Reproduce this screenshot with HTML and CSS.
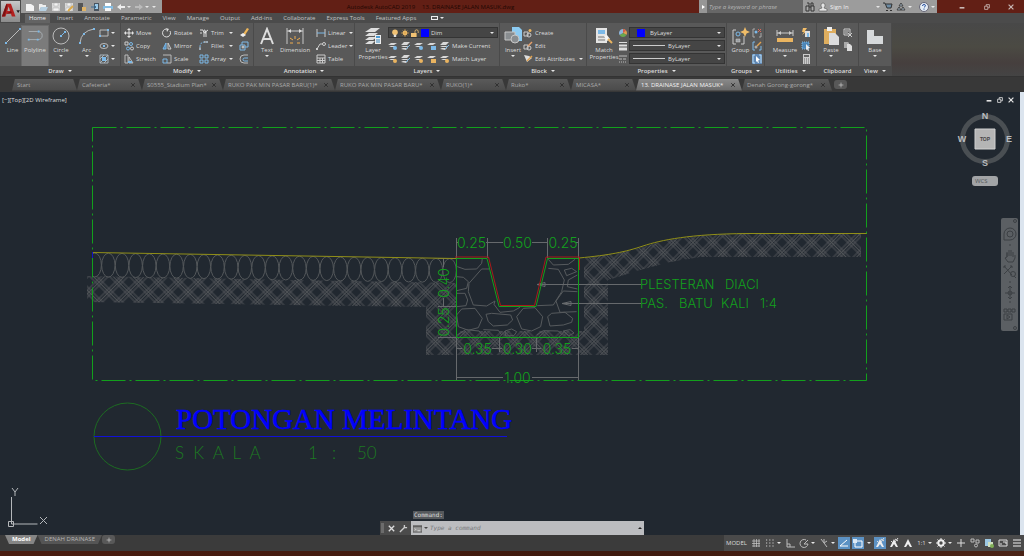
FILE: index.html
```html
<!DOCTYPE html>
<html lang="en">
<head>
    <meta charset="UTF-8">
    <title>Autodesk AutoCAD 2019 - 13. DRAINASE JALAN MASUK.dwg</title>
    <link rel="stylesheet" href="styles.css">
</head>

<body>
    <!-- icon set -->
    <svg class="defs" aria-hidden="true">
        <symbol id="new" viewBox="0 0 10 10"><path d="M1 2h5l3 2v5H1z" fill="#f4f4f4"/></symbol>
        <symbol id="open" viewBox="0 0 10 10"><path d="M1 2h3l1 1h3v2H3L1 9z" fill="#eee"/><path d="M3 5h7L8 9H1z" fill="#b7d0e2"/></symbol>
        <symbol id="save" viewBox="0 0 10 10"><path d="M1 1h8v8H1z" fill="#d8d8d8"/><path d="M3 1h4v3H3zM2 6h6v3H2z" fill="#f3f3f3" stroke="#aaa" stroke-width=".5"/></symbol>
        <symbol id="saveas" viewBox="0 0 10 10"><use href="#save"/><path d="M4 9l5-5" stroke="#dba94a" stroke-width="2"/></symbol>
        <symbol id="web" viewBox="0 0 10 10"><path d="M1 1h5v8H1z" fill="#555"/><path d="M5 5h4v4H5z" fill="#e0b468"/></symbol>
        <symbol id="phone" viewBox="0 0 10 10"><path d="M4 1h5v8H4z" fill="#4a5560"/><path d="M5 2h3v5H5z" fill="#9ccbea"/><path d="M1 5h5M4 3l2 2-2 2" stroke="#3d6d92" fill="none"/></symbol>
        <symbol id="print" viewBox="0 0 10 10"><path d="M2 1h6v3H2z" fill="#fff"/><path d="M0 4h10v3H0z" fill="#85bde2"/><path d="M2 6h6v3H2z" fill="#f6f6f6"/></symbol>
        <symbol id="undo" viewBox="0 0 10 10"><path d="M1 5l4-3v2h4v2H5v2z" fill="#eee"/></symbol>
        <symbol id="redo" viewBox="0 0 10 10"><path d="M9 5L5 2v2H1v2h4v2z" fill="#bbb"/></symbol>
        <symbol id="line" viewBox="0 0 18 18"><path d="M2 16L16 2" stroke="#bbb"/><path d="M1 15h2v2H1zM15 1h2v2h-2z" fill="#7cb9e8"/></symbol>
        <symbol id="pline" viewBox="0 0 20 18"><path d="M3 4h10q5 0 5 4.500t-5 4.500H3" fill="none" stroke="#a9b0b4"/><path d="M2 12h2v2H2zM12 12h2v2h-2zM13 3h2v2h-2z" fill="#7cb9e8"/></symbol>
        <symbol id="circle" viewBox="0 0 18 18"><circle cx="9" cy="9" r="8" fill="none" stroke="#bbb"/><path d="M9 9l4-4" stroke="#7cb9e8"/><path d="M8 8h2v2H8zM12 4h2v2h-2z" fill="#7cb9e8"/></symbol>
        <symbol id="arc" viewBox="0 0 18 18"><path d="M2 16Q3 4 16 2" fill="none" stroke="#bbb"/><path d="M1 15h2v2H1zM15 1h2v2h-2zM5 6h2v2H5z" fill="#7cb9e8"/></symbol>
        <symbol id="rect" viewBox="0 0 10 10"><path d="M1 2h8v6H1z" fill="none" stroke="#bbb"/><path d="M8 1h2v2H8zM0 7h2v2H0z" fill="#7cb9e8"/></symbol>
        <symbol id="ellipse" viewBox="0 0 10 10"><ellipse cx="5" cy="5" rx="4" ry="2.500" fill="none" stroke="#bbb"/><path d="M4 4h2v2H4z" fill="#7cb9e8"/></symbol>
        <symbol id="hatch" viewBox="0 0 10 10"><path d="M1 1h8v8H1zM1 5l4-4M1 9l8-8M5 9l4-4" fill="none" stroke="#aab4bb"/><path d="M3 3h4v4H3z" fill="#7cb9e8"/></symbol>
        <symbol id="move" viewBox="0 0 10 10"><path d="M5 1v8M1 5h8" stroke="#e4e4e4"/><path d="M5 0l2 2H3zM5 10l2-2H3zM0 5l2-2v4zM10 5L8 3v4z" fill="#e4e4e4"/></symbol>
        <symbol id="copy" viewBox="0 0 10 10"><path d="M1 1h3v3H1z" fill="none" stroke="#ccc"/><circle cx="7" cy="3" r="1.500" fill="none" stroke="#7cb9e8"/><circle cx="4" cy="7.500" r="1.500" fill="none" stroke="#7cb9e8"/><circle cx="8" cy="7.500" r="1.500" fill="none" stroke="#ccc"/></symbol>
        <symbol id="stretch" viewBox="0 0 10 10"><path d="M1 1h3v8H1zM5 3l4 6H5z" fill="none" stroke="#bbb"/><path d="M4 7h4v2H4z" fill="#7cb9e8"/></symbol>
        <symbol id="rotate" viewBox="0 0 10 10"><path d="M8 3a4 4 0 1 1-4-2" fill="none" stroke="#ddd"/><path d="M4 0l3 1-2 3z" fill="#ddd"/></symbol>
        <symbol id="mirror" viewBox="0 0 10 10"><path d="M4 2v6H1z" fill="#4e86b6" stroke="#7cb9e8"/><path d="M6 2v6h3z" fill="none" stroke="#ccc"/></symbol>
        <symbol id="scale" viewBox="0 0 10 10"><path d="M1 1h8v8H5" fill="none" stroke="#bbb"/><path d="M1 5h4v4H1z" fill="none" stroke="#7cb9e8"/></symbol>
        <symbol id="trim" viewBox="0 0 10 10"><path d="M1 2h3l1 3 4-3M5 5v4M7 5v4M1 5h2" fill="none" stroke="#ddd"/><path d="M5 1l3 3-2 2z" fill="#ddd"/></symbol>
        <symbol id="fillet" viewBox="0 0 10 10"><path d="M1 9V6q0-5 5-5h3" fill="none" stroke="#7cb9e8" stroke-dasharray="2 1"/><path d="M5 1h4M1 6v3" stroke="#ccc"/></symbol>
        <symbol id="array" viewBox="0 0 10 10"><path d="M1 1h3v3H1zM6 1h3v3H6zM1 6h3v3H1zM6 6h3v3H6z" fill="none" stroke="#7cb9e8"/></symbol>
        <symbol id="erase" viewBox="0 0 10 10"><path d="M4 6l4-6 2 1-4 6z" fill="#eeb65a"/><path d="M1 7l3-2 3 2-3 2z" fill="#eee"/></symbol>
        <symbol id="explode" viewBox="0 0 10 10"><path d="M1 4h5v5H1zM3 4V1h6v5H6" fill="none" stroke="#7cb9e8"/><circle cx="4" cy="6" r="1.500" fill="#bbb"/></symbol>
        <symbol id="offset" viewBox="0 0 10 10"><path d="M9 1H5a4 4 0 0 0 0 8h4" fill="none" stroke="#bbb"/><path d="M9 4H5.500a1.500 1.500 0 0 0 0 3H9" fill="none" stroke="#7cb9e8"/></symbol>
        <symbol id="text" viewBox="0 0 18 18"><path d="M3 17L9 2l6 15M5 12h8" fill="none" stroke="#ddd" stroke-width="2"/></symbol>
        <symbol id="dim" viewBox="0 0 18 18"><path d="M1 1v16M17 1v16M1 4h16" stroke="#c8c8c8" fill="none"/><path d="M2 4l3-2v4zM16 4l-3-2v4z" fill="#ddd"/><path d="M9 9v3M4 11l3 2M14 11l-3 2M4 16h3M14 16h-3" stroke="#f0ad4e"/></symbol>
        <symbol id="linear" viewBox="0 0 10 10"><path d="M1 1v8M9 1v8" stroke="#ccc"/><path d="M1 5h8" stroke="#7cb9e8"/></symbol>
        <symbol id="leader" viewBox="0 0 10 10"><path d="M1 8l3-5h3" fill="none" stroke="#ccc"/><circle cx="8" cy="3" r="1.500" fill="none" stroke="#ccc"/><path d="M0 7h2v2H0z" fill="#ccc"/></symbol>
        <symbol id="table" viewBox="0 0 10 10"><path d="M1 1h8v8H1zM1 4h8M1 6.500h8M4 4v5M6.500 4v5" fill="none" stroke="#ccc"/></symbol>
        <symbol id="layers" viewBox="0 0 18 18"><path d="M1 5l6-4h9l-5 4zM1 9l4-3h9l-4 3zM1 13l4-3h8l-4 3zM1 17l4-3h6l-3 3z" fill="#dedede"/><path d="M11 8h6v9h-6z" fill="#eee"/><path d="M12 9h4v2h-4z" fill="#4e9bd2"/><path d="M12 13h4M12 15h4" stroke="#3b87bd"/></symbol>
        <symbol id="lay1" viewBox="0 0 10 10"><path d="M0 4l3-2h6L6 4zM1 6l2-1h5L6 6z" fill="#d8d8d8"/><circle cx="7" cy="7" r="2" fill="#7cb9e8"/></symbol>
        <symbol id="lay2" viewBox="0 0 10 10"><path d="M0 4l3-3h6L6 4zM0 6l2-1h6L6 6zM0 8l2-1h5L5 9z" fill="#d8d8d8"/><path d="M5 8l4-4" stroke="#7cb9e8"/></symbol>
        <symbol id="lay3" viewBox="0 0 10 10"><path d="M0 4l3-2h6L6 4zM1 6l2-1h5L6 6z" fill="#d8d8d8"/><circle cx="7" cy="7" r="2" fill="#eab460"/></symbol>
        <symbol id="lay4" viewBox="0 0 10 10"><path d="M0 4l3-2h6L6 4z" fill="#d8d8d8"/><path d="M4 5h5v4H4z" fill="#eab460"/></symbol>
        <symbol id="lay5" viewBox="0 0 10 10"><path d="M0 4l3-2h6L6 4z" fill="#d8d8d8"/><path d="M4 5h5v4H4z" fill="#7cb9e8"/></symbol>
        <symbol id="bulb" viewBox="0 0 10 10"><circle cx="5" cy="4" r="3.500" fill="#f0c173"/><path d="M3.500 7h3v3h-3z" fill="#ddd"/></symbol>
        <symbol id="sun" viewBox="0 0 10 10"><circle cx="5" cy="5" r="3" fill="#f0c173"/><path d="M5 0v10M0 5h10M2 2l6 6M8 2L2 8" stroke="#e0a850" stroke-width=".8"/></symbol>
        <symbol id="lock" viewBox="0 0 10 10"><path d="M0 5h7v5H0z" fill="#f0c173"/><path d="M5 5V3q0-2 2-2t2 2v2" fill="none" stroke="#f0c173"/></symbol>
        <symbol id="insert" viewBox="0 0 18 18"><path d="M8 0h7l3 3v11H8z" fill="#8ccbf2"/><path d="M1 5h10v8H1z" fill="#898d90" stroke="#c6c6c6"/><circle cx="11" cy="12" r="4" fill="#898d90" stroke="#c6c6c6"/></symbol>
        <symbol id="create" viewBox="0 0 10 10"><path d="M1 4h4v4H1z" fill="none" stroke="#ccc"/><circle cx="6" cy="7" r="2" fill="none" stroke="#ccc"/><circle cx="7" cy="2.500" r="1.500" fill="#eab460"/></symbol>
        <symbol id="edit" viewBox="0 0 10 10"><path d="M1 4h4v4H1z" fill="none" stroke="#ccc"/><circle cx="6" cy="7" r="2" fill="none" stroke="#ccc"/><path d="M5 5l4-4" stroke="#e7a06a" stroke-width="1.500"/></symbol>
        <symbol id="attr" viewBox="0 0 10 10"><path d="M1 1l3 7 5-4-3-2z" fill="#ddd"/><path d="M4 7l5-5" stroke="#e2a24e" stroke-width="1.500"/></symbol>
        <symbol id="match" viewBox="0 0 18 18"><path d="M1 1h11v15H1z" fill="#e4e4e4"/><path d="M3 3h7v4H3z" fill="#7cb9e8"/><path d="M3 10h7M3 13h7" stroke="#777"/><path d="M9 9l3-1 3 4-3 2z" fill="#f4f4f4"/><path d="M13 12l4 4" stroke="#eab460" stroke-width="2"/></symbol>
        <symbol id="wheel" viewBox="0 0 10 10"><path d="M5 5V1a4 4 0 0 1 3.500 6z" fill="#e0a050"/><path d="M5 5l3.500 2a4 4 0 0 1-7 0z" fill="#6aa84f"/><path d="M5 5L1.500 7A4 4 0 0 1 5 1z" fill="#8fb6dc"/><path d="M5 1a4 4 0 0 1 3 1.500L5 5z" fill="#cf5b4e"/></symbol>
        <symbol id="weight" viewBox="0 0 10 10"><path d="M1 1.500h8" stroke="#ddd"/><path d="M1 4.500h8" stroke="#ddd" stroke-width="2"/><path d="M1 8h8" stroke="#ddd" stroke-width="3"/></symbol>
        <symbol id="ltype" viewBox="0 0 10 10"><path d="M1 2h8" stroke="#bbb"/><path d="M1 5h8" stroke="#bbb" stroke-dasharray="3 1"/><path d="M1 8h8" stroke="#bbb" stroke-dasharray="1 1"/></symbol>
        <symbol id="group" viewBox="0 0 18 18"><path d="M4 3H1v14h3M9 17h3V9" fill="none" stroke="#ccc"/><circle cx="6" cy="7" r="2" fill="none" stroke="#7cb9e8"/><path d="M4 12h4v3H4z" fill="#9a9fa3" stroke="#ccc" stroke-width=".5"/><path d="M13 0l1.500 3.500L18 5l-3.500 1.500L13 10l-1.500-3.500L8 5l3.500-1.500z" fill="#f0bd68"/></symbol>
        <symbol id="ungroup" viewBox="0 0 10 10"><path d="M3 1H1v8h2M7 9h2V5" fill="none" stroke="#aaa"/><circle cx="4" cy="4" r="1.500" fill="#7cb9e8"/><path d="M6 1l3 3M9 1L6 4" stroke="#d7695c"/></symbol>
        <symbol id="gedit" viewBox="0 0 10 10"><path d="M3 1H1v8h2M7 9h2V5" fill="none" stroke="#7cb9e8"/><circle cx="4" cy="6" r="1.500" fill="#aaa"/><path d="M5 5l4-4" stroke="#e2a24e" stroke-width="1.500"/></symbol>
        <symbol id="gsel" viewBox="0 0 10 10"><path d="M0 0h10v10H0z" fill="#5f87b3"/><path d="M3 1H1v8h2M7 1h2v8" fill="none" stroke="#b8dcf6"/><path d="M4 2l4 4-2 .5 1 2-1 .5-1-2-1 1z" fill="#fff"/></symbol>
        <symbol id="measure" viewBox="0 0 18 18"><path d="M1 3v6M17 3v6M1 6h16" stroke="#ccc"/><path d="M2 6l3-2v4zM16 6l-3-2v4z" fill="#ccc"/><path d="M1 11h16v4H1z" fill="#eab460"/></symbol>
        <symbol id="qsel" viewBox="0 0 10 10"><path d="M2 0L1 4h2L1 7l5-4H4l2-3z" fill="#f2bd69"/><path d="M4 3h5v6H4z" fill="#ddd"/><path d="M6 5h2v4H6z" fill="#7cb9e8"/></symbol>
        <symbol id="qcalc" viewBox="0 0 10 10"><path d="M1 1h7v7H1z" fill="#4e86b6" stroke="#7cb9e8" stroke-dasharray="1 1"/><path d="M5 3l4 4-2 .5 1 2-1 .5-1-2-1 1z" fill="#eee"/></symbol>
        <symbol id="calc" viewBox="0 0 10 10"><path d="M2 0h7v10H2z" fill="#ccc"/><path d="M3 1h5v2H3z" fill="#666"/><path d="M3 5h5M3 7h5M3 9h5" stroke="#666" stroke-dasharray="1 1"/></symbol>
        <symbol id="paste" viewBox="0 0 18 18"><path d="M2 2h12v15H2z" fill="#dfae5f"/><path d="M5 0h5v4H5z" fill="#eee"/><path d="M7 6h6l4 4v8H7z" fill="#dcdcdc"/></symbol>
        <symbol id="cut" viewBox="0 0 10 10"><path d="M1 1h6v6H1z" fill="none" stroke="#ccc"/><path d="M2 3h4M2 5h3" stroke="#ccc"/><path d="M5 5l4 4M9 5L5 9" stroke="#ccc"/></symbol>
        <symbol id="clip" viewBox="0 0 10 10"><path d="M1 1h4l1 1v5H1z" fill="#aaa"/><path d="M4 3h3l2 2v5H4z" fill="#ddd"/></symbol>
        <symbol id="base" viewBox="0 0 18 18"><path d="M1 3h7v6h9v8H1z" fill="#d6d9db"/></symbol>
        <symbol id="x" viewBox="0 0 10 10"><path d="M2 2l6 6M8 2L2 8" stroke="currentColor" stroke-width="1.500"/></symbol>
        <symbol id="min" viewBox="0 0 10 10"><path d="M2 6h6" stroke="currentColor" stroke-width="2"/></symbol>
        <symbol id="max" viewBox="0 0 10 10"><path d="M2 4h4v4H2zM4 4V2h4v4H6" fill="none" stroke="currentColor"/></symbol>
        <symbol id="find" viewBox="0 0 10 10"><path d="M1 4h3v5H1zM6 4h3v5H6zM2 1h2v3M6 4V1h2v3M4 5h2" fill="#aaa" stroke="#333"/></symbol>
        <symbol id="user" viewBox="0 0 10 10"><path d="M3 3a2 2 0 1 1 4 0v1l-1 2 3 1v2H1V7l3-1-1-2z" fill="#e4e4e4" stroke="#555" stroke-width=".6"/></symbol>
        <symbol id="cart" viewBox="0 0 10 10"><path d="M0 1h2l2 5h4l1-4H3" fill="#6d8ba3" stroke="#333"/><path d="M3 8h2v1H3zM7 8h2v1H7z" fill="#333"/></symbol>
        <symbol id="a360" viewBox="0 0 10 10"><path d="M5 1l2 3H3zM3 5l2 3H1zM7 5l2 3H5z" fill="#9fb4c5" stroke="#444"/></symbol>
        <symbol id="help" viewBox="0 0 10 10"><circle cx="5" cy="5" r="4.500" fill="#e5edf5" stroke="#667"/><path d="M3.500 4q0-1.500 1.500-1.500t1.500 1.300q0 .7-1.500 1.500M5 6.500v1.200" fill="none" stroke="#2750a0"/></symbol>
        <symbol id="grid" viewBox="0 0 10 10"><path d="M3 1v8M5.500 1v8M8 1v8M1 3h8M1 5.500h8M1 8h8" stroke="#ccc" stroke-width=".7"/></symbol>
        <symbol id="snap" viewBox="0 0 10 10"><path d="M1 2h8M1 5h8M1 8h8" stroke="#ccc" stroke-width="1.200" stroke-dasharray="1.200 2"/></symbol>
        <symbol id="ortho" viewBox="0 0 10 10"><path d="M2 1v8h8M2 6h3v3" fill="none" stroke="#bbb"/></symbol>
        <symbol id="polar" viewBox="0 0 10 10"><path d="M9 6a4 4 0 1 1-2-4M5 6l4-4M5 6h4" fill="none" stroke="#bbb"/></symbol>
        <symbol id="iso" viewBox="0 0 10 10"><path d="M2 1l6 8M5 1v3M5 5l3-2" stroke="#bbb" fill="none"/></symbol>
        <symbol id="track" viewBox="0 0 10 10"><path d="M9 8H1l7-6" fill="none" stroke="#fff"/></symbol>
        <symbol id="osnap" viewBox="0 0 10 10"><path d="M2 3h7v6H2z" fill="none" stroke="#fff"/><path d="M0 1h4v4H0z" fill="#dceaf5"/></symbol>
        <symbol id="anno" viewBox="0 0 10 10"><path d="M5 1L1 9h2l2-3 2 3h2z" fill="#eee"/></symbol>
        <symbol id="anno2" viewBox="0 0 10 10"><path d="M5 1L1 9h2l2-3 2 3h2z" fill="#eee"/><path d="M6 1l3 2M9 0L6 4M2 3l2 2" stroke="#ddd"/></symbol>
        <symbol id="gear" viewBox="0 0 10 10"><circle cx="5" cy="5" r="2.700" fill="none" stroke="#eee" stroke-width="2"/><path d="M5 0v2M5 8v2M0 5h2M8 5h2M1.500 1.500l1 1M7.500 7.500l1 1M8.500 1.500l-1 1M2.500 7.500l-1 1" stroke="#eee"/></symbol>
        <symbol id="plus" viewBox="0 0 10 10"><path d="M5 1v8M1 5h8" stroke="currentColor"/></symbol>
        <symbol id="isolate" viewBox="0 0 10 10"><path d="M1 1h3v3H1zM6 2h3v3H6z" fill="none" stroke="#bbb"/><circle cx="6" cy="7.500" r="1.500" fill="none" stroke="#bbb"/></symbol>
        <symbol id="perf" viewBox="0 0 10 10"><path d="M1 1h6v7H1z" fill="#9cc7e2"/><path d="M4 4h5v5H4z" fill="#cfe0c0"/><circle cx="8" cy="8" r="2" fill="#7fae55"/></symbol>
        <symbol id="clean" viewBox="0 0 10 10"><path d="M1 2h8v6H1zM5 4h3M8 4v2M2 6h2" fill="none" stroke="#ddd"/></symbol>
        <symbol id="menu" viewBox="0 0 10 10"><path d="M1 2h8M1 5h8M1 8h8" stroke="#eee"/></symbol>
        <symbol id="wrench" viewBox="0 0 10 10"><path d="M1 9l5-5M6 1v3h3" stroke="#ccc" stroke-width="1.500" fill="none"/></symbol>
        <symbol id="prompt" viewBox="0 0 10 10"><path d="M0 2h10v7H0z" fill="#999" stroke="#555"/><path d="M0 3h10" stroke="#555"/><path d="M2 5l1 1-1 1M5 7.500h3" fill="none" stroke="#eee" stroke-width=".8"/></symbol>
    </svg>

    <!-- title bar + ribbon tabs -->
    <header class="top">
        <button class="app" aria-label="Application menu">
            <svg viewBox="0 0 21 22"><path d="M1 16L6 2h5l5 14h-4l-1-3H6l-1 3zM7 10h3L8.500 5z" fill="#b3211f"/><path d="M1 16L6 2l1 2-3 12zM6 13l5-3 1 2z" fill="#7c1213"/><path d="M17 9h4l-2 3z" fill="#222"/></svg>
        </button>
        <div class="title-bar">
            <div class="quick">
                <button aria-label="New"><svg><use href="#new"/></svg></button>
                <button aria-label="Open"><svg><use href="#open"/></svg></button>
                <button aria-label="Save"><svg><use href="#save"/></svg></button>
                <button aria-label="Save as"><svg><use href="#saveas"/></svg></button>
                <button aria-label="Open from web"><svg><use href="#web"/></svg></button>
                <button aria-label="Save to mobile"><svg><use href="#phone"/></svg></button>
                <button aria-label="Plot"><svg><use href="#print"/></svg></button>
                <button class="drop" aria-label="Undo"><svg><use href="#undo"/></svg></button>
                <button class="drop" aria-label="Redo"><svg><use href="#redo"/></svg></button>
                <button class="drop" aria-label="Customize"></button>
            </div>
            <p class="doc-name"><span>Autodesk AutoCAD 2019</span><span>13. DRAINASE JALAN MASUK.dwg</span></p>
            <button class="search-toggle" aria-label="Collapse search"></button>
            <input class="search" type="text" aria-label="Search" placeholder="Type a keyword or phrase">
            <div class="account">
                <button aria-label="Find"><svg><use href="#find"/></svg></button>
                <button class="sign-in drop"><svg><use href="#user"/></svg>Sign In</button>
                <button aria-label="App store"><svg><use href="#cart"/></svg></button>
                <button class="drop" aria-label="A360"><svg><use href="#a360"/></svg></button>
                <button class="drop help" aria-label="Help"><svg><use href="#help"/></svg></button>
            </div>
            <div class="win-btns">
                <button aria-label="Minimize"><svg><use href="#min"/></svg></button>
                <button aria-label="Restore"><svg><use href="#max"/></svg></button>
                <button aria-label="Close"><svg><use href="#x"/></svg></button>
            </div>
        </div>
        <nav class="menu">
            <a class="on" href="#">Home</a>
            <a href="#">Insert</a>
            <a href="#">Annotate</a>
            <a href="#">Parametric</a>
            <a href="#">View</a>
            <a href="#">Manage</a>
            <a href="#">Output</a>
            <a href="#">Add-ins</a>
            <a href="#">Collaborate</a>
            <a href="#">Express Tools</a>
            <a href="#">Featured Apps</a>
            <button class="drop" aria-label="Ribbon display"><span class="rib-icon"></span></button>
        </nav>
    </header>

    <!-- ribbon -->
    <div class="ribbon">
        <section class="panel draw">
            <div class="tools">
                <button class="big"><svg><use href="#line"/></svg>Line</button>
                <button class="big on"><svg><use href="#pline"/></svg>Polyline</button>
                <button class="big more"><svg><use href="#circle"/></svg>Circle</button>
                <button class="big more"><svg><use href="#arc"/></svg>Arc</button>
                <div class="col">
                    <button class="drop" aria-label="Rectangle"><svg><use href="#rect"/></svg></button>
                    <button class="drop" aria-label="Ellipse"><svg><use href="#ellipse"/></svg></button>
                    <button class="drop" aria-label="Hatch"><svg><use href="#hatch"/></svg></button>
                </div>
            </div>
            <h2 class="drop">Draw</h2>
        </section>
        <section class="panel modify">
            <div class="tools">
                <div class="col">
                    <button><svg><use href="#move"/></svg>Move</button>
                    <button><svg><use href="#copy"/></svg>Copy</button>
                    <button><svg><use href="#stretch"/></svg>Stretch</button>
                </div>
                <div class="col">
                    <button><svg><use href="#rotate"/></svg>Rotate</button>
                    <button><svg><use href="#mirror"/></svg>Mirror</button>
                    <button><svg><use href="#scale"/></svg>Scale</button>
                </div>
                <div class="col spread">
                    <button class="drop"><svg><use href="#trim"/></svg>Trim</button>
                    <button class="drop"><svg><use href="#fillet"/></svg>Fillet</button>
                    <button class="drop"><svg><use href="#array"/></svg>Array</button>
                </div>
                <div class="col">
                    <button aria-label="Erase"><svg><use href="#erase"/></svg></button>
                    <button aria-label="Explode"><svg><use href="#explode"/></svg></button>
                    <button aria-label="Offset"><svg><use href="#offset"/></svg></button>
                </div>
            </div>
            <h2 class="drop">Modify</h2>
        </section>
        <section class="panel annotation">
            <div class="tools">
                <button class="big more"><svg><use href="#text"/></svg>Text</button>
                <button class="big"><svg><use href="#dim"/></svg>Dimension</button>
                <div class="col spread">
                    <button class="drop"><svg><use href="#linear"/></svg>Linear</button>
                    <button class="drop"><svg><use href="#leader"/></svg>Leader</button>
                    <button><svg><use href="#table"/></svg>Table</button>
                </div>
            </div>
            <h2 class="drop">Annotation</h2>
        </section>
        <section class="panel layer">
            <div class="tools">
                <button class="big"><svg><use href="#layers"/></svg>Layer<br>Properties</button>
                <div class="col">
                    <div class="combo">
                        <svg><use href="#bulb"/></svg><svg><use href="#sun"/></svg><svg><use href="#lock"/></svg><span class="swatch"></span>
                        <select aria-label="Layer"><option>Dim</option></select>
                    </div>
                    <div class="row">
                        <button aria-label="Off"><svg><use href="#lay1"/></svg></button>
                        <button aria-label="Isolate"><svg><use href="#lay2"/></svg></button>
                        <button aria-label="Freeze"><svg><use href="#lay1"/></svg></button>
                        <button aria-label="Lock"><svg><use href="#lay5"/></svg></button>
                        <button><svg><use href="#lay2"/></svg>Make Current</button>
                    </div>
                    <div class="row">
                        <button aria-label="Turn all on"><svg><use href="#lay3"/></svg></button>
                        <button aria-label="Unisolate"><svg><use href="#lay2"/></svg></button>
                        <button aria-label="Thaw all"><svg><use href="#lay3"/></svg></button>
                        <button aria-label="Unlock"><svg><use href="#lay4"/></svg></button>
                        <button><svg><use href="#lay3"/></svg>Match Layer</button>
                    </div>
                </div>
            </div>
            <h2 class="drop">Layers</h2>
        </section>
        <section class="panel block">
            <div class="tools">
                <button class="big more"><svg><use href="#insert"/></svg>Insert</button>
                <div class="col spread">
                    <button><svg><use href="#create"/></svg>Create</button>
                    <button><svg><use href="#edit"/></svg>Edit</button>
                    <button class="drop"><svg><use href="#attr"/></svg>Edit Attributes</button>
                </div>
            </div>
            <h2 class="drop">Block</h2>
        </section>
        <section class="panel props">
            <div class="tools">
                <button class="big"><svg><use href="#match"/></svg>Match<br>Properties</button>
                <div class="col">
                    <div class="row"><svg><use href="#wheel"/></svg>
                        <div class="combo color"><span class="swatch"></span><select aria-label="Object color"><option>ByLayer</option></select></div>
                    </div>
                    <div class="row"><svg><use href="#weight"/></svg>
                        <div class="combo"><span class="sample"></span><select aria-label="Lineweight"><option>ByLayer</option></select></div>
                    </div>
                    <div class="row"><svg><use href="#ltype"/></svg>
                        <div class="combo"><span class="sample"></span><select aria-label="Linetype"><option>ByLayer</option></select></div>
                    </div>
                </div>
            </div>
            <h2 class="drop">Properties</h2>
        </section>
        <section class="panel groups">
            <div class="tools">
                <button class="big"><svg><use href="#group"/></svg>Group</button>
                <div class="col">
                    <button aria-label="Ungroup"><svg><use href="#ungroup"/></svg></button>
                    <button aria-label="Group edit"><svg><use href="#gedit"/></svg></button>
                    <button aria-label="Group selection"><svg><use href="#gsel"/></svg></button>
                </div>
            </div>
            <h2 class="drop">Groups</h2>
        </section>
        <section class="panel utils">
            <div class="tools">
                <button class="big more"><svg><use href="#measure"/></svg>Measure</button>
                <div class="col">
                    <button aria-label="Quick select"><svg><use href="#qsel"/></svg></button>
                    <button aria-label="Select all"><svg><use href="#qcalc"/></svg></button>
                    <button aria-label="Calculator"><svg><use href="#calc"/></svg></button>
                </div>
            </div>
            <h2 class="drop">Utilities</h2>
        </section>
        <section class="panel clipb">
            <div class="tools">
                <button class="big more"><svg><use href="#paste"/></svg>Paste</button>
                <div class="col">
                    <button aria-label="Cut"><svg><use href="#cut"/></svg></button>
                    <button aria-label="Copy clip"><svg><use href="#clip"/></svg></button>
                </div>
            </div>
            <h2>Clipboard</h2>
        </section>
        <section class="panel view">
            <div class="tools">
                <button class="big more"><svg><use href="#base"/></svg>Base</button>
            </div>
            <h2 class="drop">View</h2>
        </section>
    </div>

    <!-- drawing tabs -->
    <nav class="files">
        <a class="w65" href="#">Start</a>
        <a class="w65" href="#">Cafeteria*<svg><use href="#x"/></svg></a>
        <a class="w80" href="#">S0555_Stadium Plan*<svg><use href="#x"/></svg></a>
        <a class="w110" href="#">RUKO PAK MIN PASAR BARU(1)*<svg><use href="#x"/></svg></a>
        <a class="w105" href="#">RUKO PAK MIN PASAR BARU*<svg><use href="#x"/></svg></a>
        <a class="w65" href="#">RUKO(1)*<svg><use href="#x"/></svg></a>
        <a class="w65" href="#">Ruko*<svg><use href="#x"/></svg></a>
        <a class="w65" href="#">MICASA*<svg><use href="#x"/></svg></a>
        <a class="w105 on" href="#">13. DRAINASE JALAN MASUK*<svg><use href="#x"/></svg></a>
        <a class="w90" href="#">Denah Gorong-gorong*<svg><use href="#x"/></svg></a>
        <button class="add" aria-label="New drawing"><svg><use href="#plus"/></svg></button>
    </nav>

    <!-- model space -->
    <main class="canvas">
        <svg class="drawing" viewBox="0 92 1020 443" preserveAspectRatio="xMinYMin meet">
            <defs>
                <!-- earth hatch, 20 px repeat on the diagonal -->
                <pattern id="earth" width="14" height="14" patternUnits="userSpaceOnUse" patternTransform="rotate(45)">
                    <path d="M0 1h14M0 3.500h14M0 6h14M1 0v14M3.500 0v14M6 0v14" stroke="#54575a" stroke-width=".9"/>
                </pattern>
                <clipPath id="road"><path d="M93 250H456V286H93z"/></clipPath>
            </defs>

            <text class="vp-label" x="2" y="102">[−][Top][2D Wireframe]</text>

            <path fill="url(#earth)" d="M87 276L456 283V331H584V258L603 255 623 252 643 247 660 242 687 237 710 235 747 233H861V257H700L670 262 640 270 608 280V355H426V307L87 302z"/>

            <!-- stone course under the road -->
            <g clip-path="url(#road)">
                <path class="course" d="M88 265a6.700 12 0 1 1 13.400 0a6.700 12 0 1 1-13.400 0m13.650.2a6.700 12 0 1 1 13.400 0a6.700 12 0 1 1-13.400 0m13.650.2a6.700 12 0 1 1 13.400 0a6.700 12 0 1 1-13.400 0m13.650.2a6.700 12 0 1 1 13.400 0a6.700 12 0 1 1-13.400 0m13.650.2a6.700 12 0 1 1 13.400 0a6.700 12 0 1 1-13.400 0m13.650.2a6.700 12 0 1 1 13.400 0a6.700 12 0 1 1-13.400 0m13.650.2a6.700 12 0 1 1 13.400 0a6.700 12 0 1 1-13.400 0m13.650.2a6.700 12 0 1 1 13.400 0a6.700 12 0 1 1-13.400 0m13.650.2a6.700 12 0 1 1 13.400 0a6.700 12 0 1 1-13.400 0"/>
                <path class="course" d="M210.850 267a6.700 12 0 1 1 13.400 0a6.700 12 0 1 1-13.400 0m13.650.2a6.700 12 0 1 1 13.400 0a6.700 12 0 1 1-13.400 0m13.650.2a6.700 12 0 1 1 13.400 0a6.700 12 0 1 1-13.400 0m13.650.2a6.700 12 0 1 1 13.400 0a6.700 12 0 1 1-13.400 0m13.650.2a6.700 12 0 1 1 13.400 0a6.700 12 0 1 1-13.400 0m13.650.2a6.700 12 0 1 1 13.400 0a6.700 12 0 1 1-13.400 0m13.650.2a6.700 12 0 1 1 13.400 0a6.700 12 0 1 1-13.400 0m13.650.2a6.700 12 0 1 1 13.400 0a6.700 12 0 1 1-13.400 0m13.650.2a6.700 12 0 1 1 13.400 0a6.700 12 0 1 1-13.400 0"/>
                <path class="course" d="M333.700 269a6.700 12 0 1 1 13.400 0a6.700 12 0 1 1-13.400 0m13.650.2a6.700 12 0 1 1 13.400 0a6.700 12 0 1 1-13.400 0m13.650.2a6.700 12 0 1 1 13.400 0a6.700 12 0 1 1-13.400 0m13.650.2a6.700 12 0 1 1 13.400 0a6.700 12 0 1 1-13.400 0m13.650.2a6.700 12 0 1 1 13.400 0a6.700 12 0 1 1-13.400 0m13.650.2a6.700 12 0 1 1 13.400 0a6.700 12 0 1 1-13.400 0m13.650.2a6.700 12 0 1 1 13.400 0a6.700 12 0 1 1-13.400 0m13.650.2a6.700 12 0 1 1 13.400 0a6.700 12 0 1 1-13.400 0m13.650.2a6.700 12 0 1 1 13.400 0a6.700 12 0 1 1-13.400 0"/>
            </g>

            <!-- masonry -->
            <g class="stones" transform="translate(420 225) scale(.3333)">
                <path d="M125 252l40-2 22 30-12 28-30 8-30-11-5-35z"/>
                <path d="M198 268l17-3 57 5 6 15-16 15-42 3-15-13z"/>
                <path d="M290 275l20-25 35-2 23 27-6 30-27 13-30-6z"/>
                <path d="M383 275l12-10 40-3 23 18-3 12-25 8-40 3z"/>
                <path d="M208 132l-23 0-38 43-2 25 15 40 40 3 25-15"/>
                <path d="M112 125l23 8 35-1 15-17 2-15"/>
                <path d="M110 155l20 2 15 13-5 20-30 7M110 205h25l8 20-5 17-28 3"/>
                <path d="M385 130l30 3 18 32-8 35-25 40-48 2"/>
                <path d="M385 103l15 17 45-2 20-15M433 135l22-5 15 10-30 12z"/>
                <path d="M472 150l-27 15-3 20 30 7M472 200l-42-2-22 30 12 34 50-2"/>
                <path d="M225 228l-3 10 18 24 40-4 20-11"/>
                <path d="M255 318l20-6 15 8-8 12-25 1zM430 318l20-4 12 10-15 8z"/>
                <path d="M112 330l25-16 40 4 12 14M190 314l45 2 10 14M350 330l20-13 45 1 12 12"/>
            </g>

            <!-- dimension and leader lines -->
            <path class="thin" d="M456.500 238V380M487.500 238V258M547.500 238V258M578.500 238V380M457 242.500h1M486 242.500h17M532 242.500h16M576 242.500h2"/>
            <path class="thin" d="M457 377.500h46M532 377.500h46M457 348.500h5M492 348.500h10M532 348.500h9M572 348.500h6M443.500 258v9M443.500 298v9M438 258.500h18M438 306.500h18M438 337.500h18M499.500 338v14M536.500 338v14"/>
            <path class="thin" d="M537 284.500h104M562 303.500h79M537 284.500l8-2v4zM562 303.500l9-2v4z"/>

            <path class="yellow" d="M93 252.500L456 258.500M579 258C610 255 625 252 643 246S690 234 747 233.500H867"/>
            <path class="red" d="M455 257H488.500L500.500 305.500H534.500L546 257H579.500V270"/>
            <path class="green" d="M456.500 258.500H487L499 306.500H536L547.500 258.500H578.500V337.500H456.500z"/>
            <path class="green dash" d="M92.500 127.500H866.500V380.500H92.500z"/>
            <path class="blue" d="M92.500 252v6"/>

            <g class="dims">
                <text x="471.500" y="248">0.25</text>
                <text x="517.500" y="248">0.50</text>
                <text x="563" y="248">0.25</text>
                <text x="477.500" y="354">0.35</text>
                <text x="517.500" y="354">0.30</text>
                <text x="557" y="354">0.35</text>
                <text x="517.500" y="383">1.00</text>
                <text transform="translate(449 283) rotate(-90)">0.40</text>
                <text transform="translate(449 322) rotate(-90)">0.25</text>
            </g>
            <text class="note" x="640" y="289">PLESTERAN <tspan x="725">DIACI</tspan></text>
            <text class="note" x="640" y="308">PAS. <tspan x="679">BATU </tspan><tspan x="721">KALI </tspan><tspan x="760">1:4</tspan></text>

            <!-- view title -->
            <circle class="ring" cx="127.500" cy="436.500" r="33.500"/>
            <path class="title-line" d="M94 436H507V437H94z"/>
            <text class="view-title" x="176" y="429">POTONGAN MELINTANG</text>
            <text class="view-scale" x="175" y="459">S  K  A  L  A<tspan x="308">1</tspan><tspan x="332">:</tspan><tspan x="357">50</tspan></text>

            <!-- UCS icon -->
            <path class="ucs" d="M11.500 497v27h26M8.500 521.500h5v5h-5zM12 488l3 4 3-4M15 492v4M40 517l7 7M47 517l-7 7"/>
        </svg>

        <div class="doc-btns">
            <button aria-label="Minimize drawing"><svg><use href="#min"/></svg></button>
            <button aria-label="Restore drawing"><svg><use href="#max"/></svg></button>
            <button aria-label="Close drawing"><svg><use href="#x"/></svg></button>
        </div>
        <svg class="cube" viewBox="0 0 56 58">
            <circle cx="28" cy="27" r="22.500" fill="none" stroke="#4a4f53" stroke-width="5"/>
            <path d="M18 17h20v20H18z" fill="#b5b5b5" stroke="#d0d0d0"/>
            <text class="face" x="28" y="29">TOP</text>
            <text x="28" y="7">N</text>
            <text x="28" y="54">S</text>
            <text x="5" y="30">W</text>
            <text x="52" y="30">E</text>
        </svg>
        <button class="wcs">WCS</button>
        <div class="navbar">
            <svg viewBox="0 0 17 113" fill="none" stroke="#3c4044">
                <circle cx="14" cy="3" r="1.500"/><circle cx="14" cy="110" r="1.500"/>
                <path d="M3 16a6 6 0 1 1 6 6H3zM8 27h2"/><circle cx="9" cy="16" r="3"/>
                <path d="M4 40l2-1v-4M6 39v-5M8 38v-6M10 38v-6M12 39v-5M4 40l3 4h5l2-4v-3"/>
                <path d="M3 48l8 9M11 48l-8 8M3 50v-2h2M9 48h2v2M8 64h2"/><circle cx="12" cy="56" r="2.500"/><path d="M13 58l2 2"/>
                <path d="M9 68v13M4 75h10M7 70l2-2 2 2M7 79l2 2 2-2M8 84h2"/><circle cx="9" cy="75" r="2"/>
                <path d="M3 91h3v3H3zM7 91h3v3H7zM11 91h3v3h-3zM3 96h8v6H3zM6 97l3 2-3 2z"/>
            </svg>
        </div>

        <div class="command">
            <output class="history">Command:</output>
            <div class="cmd-bar">
                <span class="grip"></span>
                <button aria-label="Close command line"><svg><use href="#x"/></svg></button>
                <button aria-label="Customize command line"><svg><use href="#wrench"/></svg></button>
                <div class="cmd-box">
                    <button class="prompt drop" aria-label="Recent commands"><svg><use href="#prompt"/></svg></button>
                    <input type="text" aria-label="Command" placeholder="Type a command">
                    <span class="up"></span>
                </div>
            </div>
        </div>
    </main>

    <!-- layout tabs + status bar -->
    <footer class="bottom">
        <nav class="layouts">
            <a class="on" href="#">Model</a>
            <a href="#">DENAH DRAINASE</a>
            <button class="add" aria-label="New layout"><svg><use href="#plus"/></svg></button>
        </nav>
        <div class="status">
            <button class="model">MODEL</button>
            <button aria-label="Grid"><svg><use href="#grid"/></svg></button>
            <button class="drop" aria-label="Snap"><svg><use href="#snap"/></svg></button>
            <button aria-label="Ortho"><svg><use href="#ortho"/></svg></button>
            <button class="drop" aria-label="Polar"><svg><use href="#polar"/></svg></button>
            <button class="drop" aria-label="Isodraft"><svg><use href="#iso"/></svg></button>
            <button class="on" aria-label="Tracking"><svg><use href="#track"/></svg></button>
            <button class="on" aria-label="Object snap"><svg><use href="#osnap"/></svg></button>
            <button class="drop" aria-label="Snap options"></button>
            <button class="on" aria-label="Annotation visibility"><svg><use href="#anno2"/></svg></button>
            <button aria-label="Auto scale"><svg><use href="#anno2"/></svg></button>
            <button aria-label="Annotation scale"><svg><use href="#anno"/></svg></button>
            <button class="drop">1:1</button>
            <button class="drop" aria-label="Workspace"><svg><use href="#gear"/></svg></button>
            <button aria-label="Monitor"><svg><use href="#plus"/></svg></button>
            <button aria-label="Isolate objects"><svg><use href="#isolate"/></svg></button>
            <button aria-label="Performance"><svg><use href="#perf"/></svg></button>
            <button aria-label="Clean screen"><svg><use href="#clean"/></svg></button>
            <button aria-label="Customization"><svg><use href="#menu"/></svg></button>
        </div>
    </footer>
    <div class="taskbar"></div>
</body>
</html>
```
FILE: styles.css
```css
* {
    box-sizing: border-box;
}

html,
body,
h2,
p {
    margin: 0;
    padding: 0;
}

body {
    display: flex;
    flex-direction: column;
    height: 100vh;
    overflow: hidden;
    background: #3b3b3b;
    color: #dcdcdc;
    font: 6px/8px "Open Sans", "Noto Sans", sans-serif;
}

button,
input,
select {
    margin: 0;
    padding: 0;
    border: 0;
    background: none;
    color: inherit;
    font: inherit;
}

button {
    display: flex;
    align-items: center;
    gap: 2px;
    white-space: nowrap;
}

a {
    color: inherit;
    text-decoration: none;
    white-space: nowrap;
}

svg {
    width: 10px;
    height: 10px;
    flex: none;
}

.defs {
    position: absolute;
    width: 0;
    height: 0;
}

/* small down arrow */
.drop::after,
.big.more::after,
.combo::after {
    content: "";
    flex: none;
    border: 2px solid transparent;
    border-top-color: #e6e6e6;
    border-bottom: 0;
}

/* title bar */
.top {
    display: grid;
    grid-template: 13px 10px / 21px 1fr;
    background: #4b4b4b;
}

.app {
    grid-row: 1 / 3;
    background: linear-gradient(#c8c8c8, #8b8b8b);
    border: 1px solid #4a4a4a;
}

.app svg {
    width: 19px;
    height: 20px;
}

.title-bar {
    display: flex;
    background: #621f15;
}

.quick,
.account {
    display: flex;
    align-items: center;
    background: #9c9c9c;
}

.quick {
    width: 141px;
    padding: 0 4px;
    gap: 3px;
}

.quick button {
    gap: 1px;
}

.doc-name {
    display: flex;
    flex: 1;
    justify-content: center;
    gap: 7px;
    padding-top: 3px;
    color: #210804;
    white-space: nowrap;
}

.search-toggle {
    width: 8px;
    justify-content: center;
    background: #969696;
}

.search-toggle::after {
    content: "";
    border: 2px solid transparent;
    border-left: 3px solid #fff;
    border-right: 0;
}

.search {
    width: 96px;
    padding-left: 2px;
    background: #676767;
    font-style: italic;
}

.search::placeholder {
    color: #b5b5b5;
}

.account {
    width: 134px;
    padding: 0 2px;
    gap: 3px;
    color: #f0f0f0;
}

.sign-in {
    width: 62px;
}

.sign-in::after {
    margin-left: auto;
}

.help {
    margin-left: auto;
}

.win-btns {
    display: flex;
    width: 87px;
    padding: 0 9px 0 21px;
    justify-content: space-between;
    color: #c9b8b4;
}

.win-btns svg {
    width: 8px;
    height: 8px;
}

/* ribbon tabs */
.menu {
    display: flex;
    align-items: flex-end;
    gap: 3px;
    padding-left: 4px;
    color: #c4c4c4;
}

.menu a {
    padding: 0 4px 1px;
}

.menu a.on {
    background: #636363;
    color: #eee;
}

.menu .drop {
    padding: 0 0 3px 8px;
}

.rib-icon {
    width: 7px;
    height: 4px;
    border: 1px solid #eee;
    background: #555;
}

/* ribbon */
.ribbon {
    display: flex;
    height: 54px;
    background: linear-gradient(#484848, #4b4a43 45%, #463f3e 75%, #444);
    border-bottom: 1px solid #333;
}

.panel {
    display: flex;
    flex-direction: column;
    flex: none;
    padding-top: 3px;
    background: #595959;
    border-right: 1px solid #4a4a4a;
}

.panel h2 {
    display: flex;
    align-items: center;
    justify-content: center;
    gap: 4px;
    flex: 1;
    background: #4a4a4a;
    font-size: 6px;
    font-weight: 600;
}

.tools {
    display: grid;
    height: 40px;
    padding: 0 3px;
}

.big {
    flex-direction: column;
    gap: 1px;
    padding-top: 1px;
    line-height: 7px;
    justify-content: flex-start;
}

.big svg {
    width: 18px;
    height: 18px;
    margin-bottom: 1px;
}

.big.on {
    background: #7b7b7b;
    outline: 1px solid #6a6a6a;
}

.col {
    display: grid;
    grid-template-rows: repeat(3, 13px);
    align-items: center;
}

.col.spread .drop {
    justify-content: flex-start;
}

.col.spread .drop::after {
    margin-left: auto;
}

.row {
    display: flex;
    align-items: center;
    gap: 3px;
}

.draw { width: 121px; }
.modify { width: 133px; }
.annotation { width: 101px; }
.layer { width: 145px; }
.block { width: 87px; }
.props { width: 140px; }
.groups { width: 38px; }
.utils { width: 52px; }
.clipb { width: 42px; }
.view { width: 33px; }

.draw .tools { grid-template-columns: 19px 26px 26px 25px 1fr; }
.modify .tools { grid-template-columns: 38px 37px 34px 1fr; }
.modify .col:last-child { padding-left: 6px; }
.annotation .tools { grid-template-columns: 20px 36px 1fr; }
.annotation .col { padding-left: 3px; }
.layer .tools { grid-template-columns: 30px 1fr; padding-right: 1px; }
.block .tools { grid-template-columns: 20px 1fr; }
.props .tools { grid-template-columns: 28px 1fr; padding-right: 1px; }
.groups .tools { grid-template-columns: 1fr 10px; padding: 0 2px; }
.utils .tools { grid-template-columns: 32px 10px; padding-left: 4px; }
.clipb .tools { grid-template-columns: 24px 10px; padding-left: 2px; }

/* drop-down lists */
.combo {
    display: flex;
    align-items: center;
    gap: 3px;
    flex: 1;
    height: 11px;
    padding: 0 3px;
    background: #454545;
    border: 1px solid #343434;
}

.combo svg {
    width: 8px;
    height: 8px;
}

.combo select {
    flex: 1;
    min-width: 0;
    height: 9px;
    appearance: none;
}

.layer .combo {
    gap: 2px;
    padding-left: 2px;
}

.swatch {
    width: 8px;
    height: 8px;
    background: #0000ff;
}

.color {
    gap: 5px;
    padding-left: 7px;
}

.color::after {
    margin-left: -2px;
}

.sample {
    width: 32px;
    border-top: 1px solid #ccc;
}

.props .row {
    gap: 1px;
}

/* drawing tabs */
.files {
    display: flex;
    align-items: center;
    height: 15px;
    padding-left: 12px;
    background: #383838;
    color: #a9a9a9;
}

.files a {
    display: flex;
    align-items: center;
    justify-content: space-between;
    height: 12px;
    padding: 0 6px 0 5px;
    background: linear-gradient(#5a5a5a, #4a4a4a);
    clip-path: polygon(3px 0, calc(100% - 4px) 0, 100% 100%, 0 100%);
}

.files a.on {
    background: linear-gradient(#8a8a8a, #6a6a6a);
    color: #f2f2f2;
}

.files svg {
    width: 6px;
    height: 6px;
    color: #2e2e2e;
}

.w65 { width: 65px; }
.w80 { width: 81px; }
.w90 { width: 90px; }
.w105 { width: 106px; }
.w110 { width: 112px; }

.add {
    justify-content: center;
    width: 13px;
    height: 9px;
    margin-left: 2px;
    background: #585858;
    border-radius: 3px;
    color: #ddd;
}

.add svg,
.files .add svg {
    width: 6px;
    height: 6px;
    color: #ddd;
}

/* model space */
.canvas {
    position: relative;
    flex: 1;
    min-height: 0;
    background: #212830;
    border-right: 4px solid #dbe4ee;
}

.drawing {
    display: block;
    width: 100%;
    height: 100%;
}

.drawing text {
    white-space: pre;
}

.vp-label {
    fill: #dcdcdc;
}

.course {
    fill: none;
    stroke: #53575a;
}

.stones path {
    fill: none;
    stroke: #565a5d;
    stroke-width: 3;
}

.thin,
.ucs {
    fill: none;
    stroke: #66696c;
}

.ucs {
    stroke: #b4b7ba;
}

.yellow {
    fill: none;
    stroke: #918f18;
}

.red {
    fill: none;
    stroke: #a81a1a;
}

.green {
    fill: none;
    stroke: #12a01c;
}

.dash {
    stroke-dasharray: 24 4 2 4;
}

.blue {
    fill: none;
    stroke: #1010c8;
}

.title-line {
    fill: #1010d8;
}

.ring {
    fill: none;
    stroke: #1d6b22;
}

.dims,
.note {
    fill: #12a01c;
    font: 300 14px Inter, sans-serif;
}

.dims {
    text-anchor: middle;
}

.note {
    font-size: 13px;
}

.view-title {
    fill: #0000ff;
    stroke: #0000ff;
    stroke-width: .5;
    font: 29px "Liberation Serif", serif;
}

.view-scale {
    fill: #1d7a22;
    font: 300 17px Lato, sans-serif;
}

/* overlays on the drawing */
.doc-btns {
    position: absolute;
    top: 4px;
    right: 5px;
    display: flex;
    gap: 3px;
    color: #e4e4e4;
}

.doc-btns svg {
    width: 8px;
    height: 8px;
}

.cube {
    position: absolute;
    top: 20px;
    right: 7px;
    width: 56px;
    height: 58px;
    fill: #b9bcbf;
    font: bold 9px "Liberation Sans", sans-serif;
    text-anchor: middle;
}

.cube .face {
    fill: #444;
    font-size: 5px;
}

.wcs {
    position: absolute;
    top: 84px;
    right: 22px;
    width: 26px;
    height: 10px;
    padding-left: 3px;
    background: #a2a4a6;
    border-radius: 3px;
    color: #54585b;
}

.navbar {
    position: absolute;
    top: 126px;
    right: 2px;
    background: #5b5f63;
    border-radius: 2px;
}

.navbar svg {
    display: block;
    width: 17px;
    height: 113px;
}

.command {
    position: absolute;
    bottom: 0;
    left: 380px;
    right: 376px;
    font: 6px/8px "DejaVu Sans Mono", monospace;
}

.history {
    display: table;
    margin: 0 0 2px 33px;
    padding: 0 1px;
    background: #56595c;
}

.cmd-bar {
    display: flex;
    gap: 3px;
    height: 14px;
    background: #4b4b4b;
}

.cmd-bar svg {
    width: 9px;
    height: 9px;
}

.grip {
    width: 3px;
    margin: 2px 0 2px 1px;
    background: #6c6c6c;
}

.cmd-box {
    display: flex;
    flex: 1;
    align-items: center;
    gap: 2px;
    padding: 0 2px;
    background: #bcbdc0;
}

.cmd-box input {
    flex: 1;
    font-style: italic;
}

.cmd-box input::placeholder {
    color: #77797c;
}

.prompt::after {
    border-top-color: #444;
}

.up {
    border: 2px solid transparent;
    border-bottom-color: #222;
    border-top: 0;
}

/* status bar */
.bottom {
    display: flex;
    justify-content: space-between;
    height: 16px;
}

.layouts {
    display: flex;
    height: 9px;
    padding-left: 5px;
    color: #b5b5b5;
}

.layouts a {
    padding: 0 7px;
    background: #555;
    clip-path: polygon(0 0, 100% 0, calc(100% - 4px) 100%, 4px 100%);
}

.layouts a.on {
    background: #858585;
    color: #fff;
    font-weight: bold;
}

.layouts .add {
    margin-left: 0;
}

.status {
    display: flex;
    align-items: center;
    justify-content: space-between;
    width: 300px;
    padding: 0 1px;
    background: #4a4a4a;
}

.status button {
    height: 12px;
    padding: 0 1px;
}

.status .on {
    background: #5c92c4;
}

.taskbar {
    height: 5px;
    background: linear-gradient(90deg, #4a1c10, #3f1a0e 60%, #4a2316);
}
```
